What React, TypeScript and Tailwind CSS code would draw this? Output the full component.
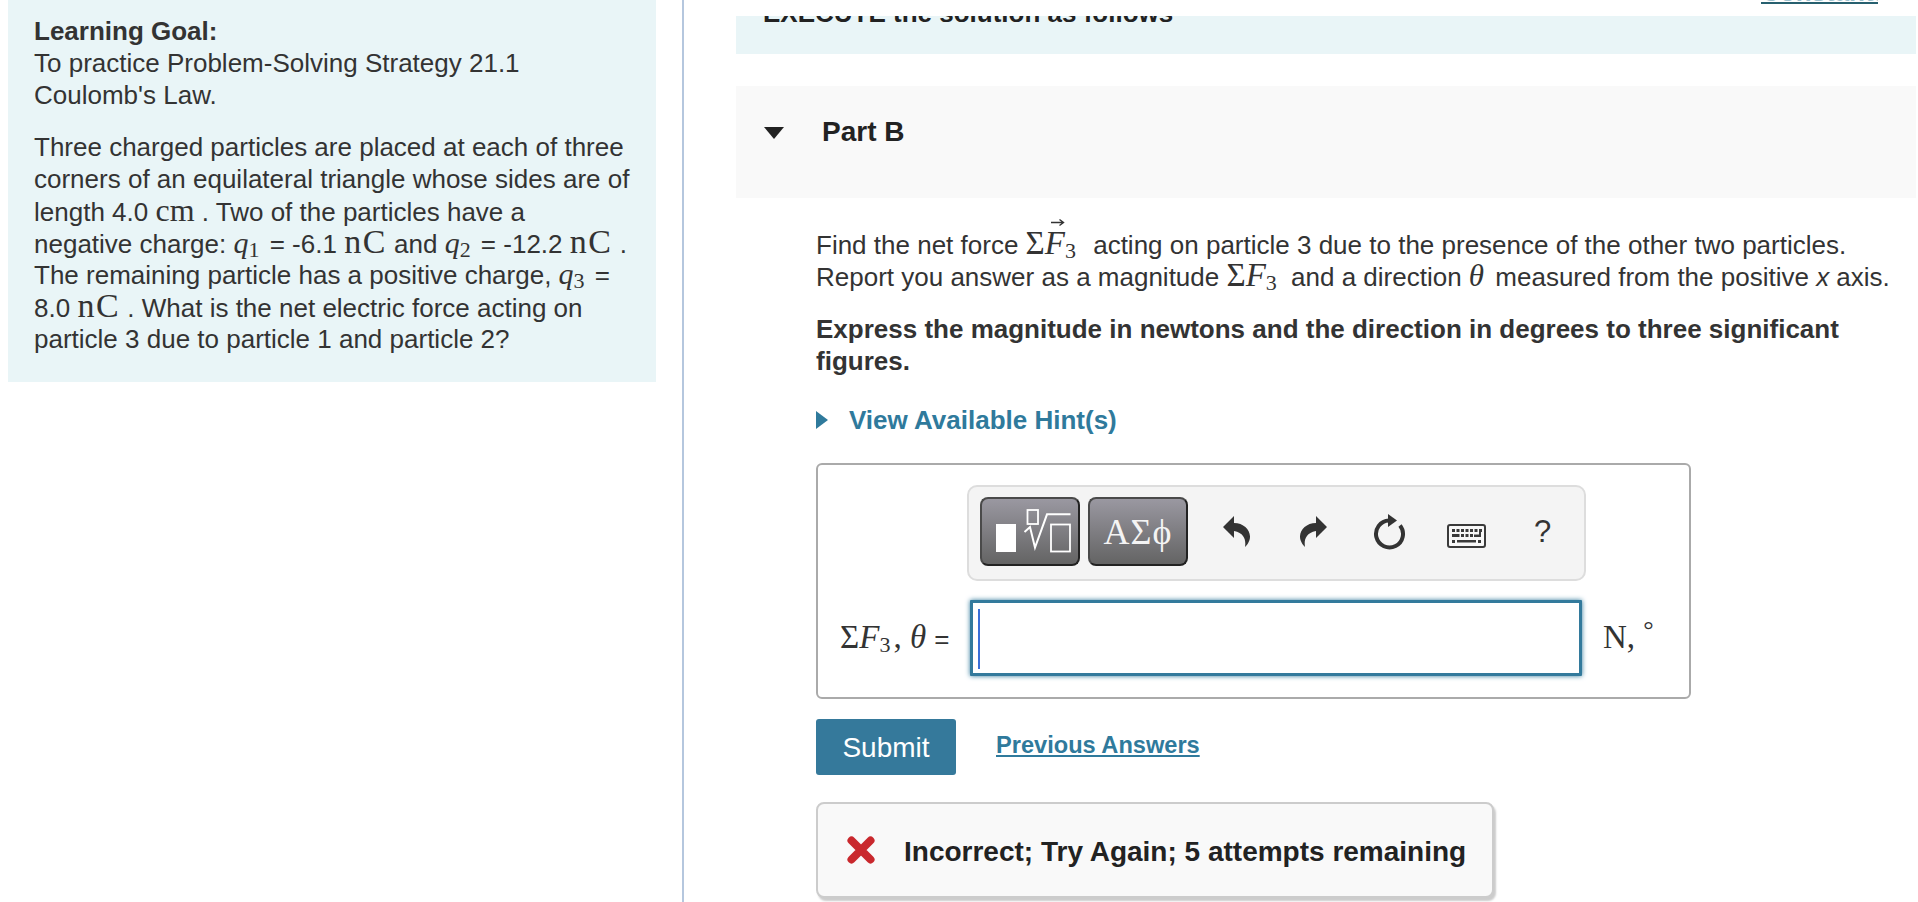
import React from "react";

const math = "font-['Liberation_Serif',serif]";

function Q({ n }: { n: number }) {
  return (
    <span className={`${math} italic text-[30px] leading-none mr-[3px]`}>
      q<span className="not-italic text-[22px] align-[-4px] leading-none">{n}</span>
    </span>
  );
}
function Cm() {
  return <span className={`${math} text-[32px] leading-none`}>cm</span>;
}
function NC() {
  return <span className={`${math} text-[34px] tracking-[1.5px] leading-none`}>nC</span>;
}
function SF({ arrow, after = "" }: { arrow?: boolean; after?: string }) {
  return (
    <span className={`${math} text-[33px] leading-none whitespace-nowrap ${after}`}>
      Σ
      <span className="relative italic">
        F
        {arrow && (
          <svg className="absolute left-[6px] -top-[7px]" width="14" height="9" viewBox="0 0 14 9">
            <path d="M0 4.500H12M8.500 1.500L12.500 4.500L8.500 7.500" fill="none" stroke="#333" strokeWidth="1.400" />
          </svg>
        )}
      </span>
      <span className="text-[22px] align-[-4px] leading-none">3</span>
    </span>
  );
}

function Reply({ flip }: { flip?: boolean }) {
  return (
    <svg width="27" height="31" viewBox="0 0 27 31" className={flip ? "-scale-x-100" : ""}>
      <path d="M0 11 L11 0 V7 C22 7 29 16 26.500 24 C25.500 27 24 29 22 31 C23 25 22 17 11 15 V22 Z" fill="#333" />
    </svg>
  );
}

function Reload() {
  return (
    <svg width="33" height="36" viewBox="0 0 33 36">
      <path d="M16 6.500 A 13.500 13.500 0 1 0 27 11.500" fill="none" stroke="#333" strokeWidth="4" />
      <path d="M15 0 L24 6.500 L15 13 Z" fill="#333" />
    </svg>
  );
}

function Keyboard() {
  const row1 = [5, 9.5, 14, 18.5, 23, 27.5, 32];
  const row2 = [5, 9.5, 14, 18.5, 23];
  return (
    <svg width="39" height="24" viewBox="0 0 39 24">
      <rect x="1" y="1" width="37" height="22" rx="2" fill="#f8f8f8" stroke="#3a3a3a" strokeWidth="2" />
      {row1.map((x) => (
        <rect key={x} x={x} y="5" width="3" height="3" fill="#3a3a3a" />
      ))}
      {row2.map((x) => (
        <rect key={x} x={x} y="10" width="3" height="3" fill="#3a3a3a" />
      ))}
      <path d="M5 10h5v3H5z M27 10.500h5V6h2v7h-7z" fill="#3a3a3a" />
      <rect x="5" y="16" width="3" height="3" fill="#3a3a3a" />
      <rect x="10" y="16" width="19" height="2.500" fill="#3a3a3a" />
      <rect x="31" y="16" width="3" height="3" fill="#3a3a3a" />
    </svg>
  );
}

function TemplateIcon() {
  return (
    <svg width="78" height="46" viewBox="0 0 78 46">
      <rect x="0" y="15" width="20" height="28" fill="#fff" />
      <rect x="31.500" y="1" width="10.500" height="14" fill="none" stroke="#fff" strokeWidth="1.800" />
      <path d="M28.500 23 L34 18 L39 38.500 L51 5.300 H74.500" fill="none" stroke="#fff" strokeWidth="2" />
      <rect x="55" y="15.500" width="19" height="27" fill="none" stroke="#fff" strokeWidth="1.800" />
    </svg>
  );
}

const btn =
  "flex h-[69px] w-[100px] items-center rounded-[8px] border-[2px] border-[#4a4a4a] border-r-[#222] border-b-[#222] bg-gradient-to-b from-[#9a98a1] to-[#646464]";
const line = "h-[32px] whitespace-nowrap";
const lineUp1 = "-mt-px h-[33px] whitespace-nowrap";
const lineUp2 = "-mt-[2px] h-[34px] whitespace-nowrap";

export default function App() {
  return (
    <div className="flex h-[902px] w-[1918px] overflow-hidden bg-white font-['Liberation_Sans',Arial,sans-serif] text-[26px] leading-[32px] text-[#333]">
      {/* left column */}
      <div className="h-full w-[684px] shrink-0 border-r-2 border-[#b5c7de] pl-2">
        <div className="h-[382px] w-[648px] bg-[#e9f5f7] pl-[26px] pt-[15px]">
          <p className="font-bold">Learning Goal:</p>
          <p>To practice Problem-Solving Strategy 21.1</p>
          <p>Coulomb's Law.</p>
          <p className={`mt-[20px] ${line}`}>Three charged particles are placed at each of three</p>
          <p className={line}>corners of an equilateral triangle whose sides are of</p>
          <p className={lineUp1}>
            length 4.0 <Cm /> . Two of the particles have a
          </p>
          <p className={lineUp2}>
            negative charge: <Q n={1} /> = -6.1 <NC /> and <Q n={2} /> = -12.2 <NC /> .
          </p>
          <p className={line}>
            The remaining particle has a positive charge, <Q n={3} /> =
          </p>
          <p className={lineUp2}>
            8.0 <NC /> . What is the net electric force acting on
          </p>
          <p className={line}>particle 3 due to particle 1 and particle 2?</p>
        </div>
      </div>

      {/* right column */}
      <div className="flex min-w-0 flex-1 flex-col pl-[52px] pr-[2px]">
        <div className="flex h-4 shrink-0 justify-end pr-[38px]">
          <div className="h-[4px] w-[117px] overflow-hidden border-b-2 border-[#27606f]">
            <div className="-mt-[24px] text-center font-bold text-[#9fc3cf]">Constants</div>
          </div>
        </div>
        <div className="h-[38px] shrink-0 overflow-hidden bg-[#e9f5f7] pl-[27px]">
          <p className="-mt-[19px] font-bold text-[#222]">EXECUTE the solution as follows</p>
        </div>

        <div className="mt-8 flex h-[112px] shrink-0 items-start bg-[#f9f9f9] pl-[28px] pt-[30px]">
          <svg width="20" height="12" viewBox="0 0 20 12" className="mt-[11px]">
            <path d="M0 0H20L10 12Z" fill="#222" />
          </svg>
          <h2 className="ml-[38px] text-[28px] font-bold text-[#222]">Part B</h2>
        </div>

        <div className="shrink-0 pl-[80px]">
          <p className={`mt-[29px] ${line}`}>
            Find the net force <SF arrow after="mr-[10px]" /> acting on particle 3 due to the presence of the other two particles.
          </p>
          <p className={line}>
            Report you answer as a magnitude <SF after="mr-[7px]" /> and a direction <span className={`${math} italic text-[31px] leading-none mr-[4px]`}>θ</span> measured from the positive <i>x</i> axis.
          </p>
          <p className="mt-[22px] w-[1040px] font-bold">
            Express the magnitude in newtons and the direction in degrees to three significant figures.
          </p>
          <div className="mt-[27px] flex items-center font-bold text-[#2f7a9c]">
            <svg width="12" height="18" viewBox="0 0 12 18">
              <path d="M0 0L12 9L0 18Z" fill="#2f7a9c" />
            </svg>
            <span className="ml-[21px]">View Available Hint(s)</span>
          </div>

          {/* answer box */}
          <div className="mt-[27px] h-[236px] w-[875px] rounded-[6px] border-2 border-[#aaa] pt-[20px]">
            <div className="ml-[149px] flex h-[96px] w-[619px] items-center rounded-[10px] border-2 border-[#ddd] bg-[#f4f4f4] pb-[3px] pl-[11px]">
              <div className={`${btn} justify-start pl-[14px]`}>
                <TemplateIcon />
              </div>
              <div className={`${btn} ml-[8px] justify-center ${math} text-[36px] text-[#f4f4f4] tracking-[1px]`}>ΑΣϕ</div>
              <div className="ml-[35px]"><Reply /></div>
              <div className="ml-[50px]"><Reply flip /></div>
              <div className="ml-[46px]"><Reload /></div>
              <div className="ml-[41px] mt-[8px]"><Keyboard /></div>
              <span className="ml-[48px] text-[31px] text-[#333]">?</span>
            </div>

            <div className="mt-[19px] flex items-center">
              <div className={`${math} ml-[22px] w-[130px] whitespace-nowrap text-[33px]`}>
                <SF after="mr-[3px]" />, <i>θ</i> <span className="font-['Liberation_Sans',sans-serif] text-[26px]">=</span>
              </div>
              <div className="h-[76px] w-[612px] rounded-[1px] border-[3px] border-[#337a9c] bg-white pl-[5px] pt-[6px] shadow-[0_0_5px_#337a9c]">
                <div className="h-[60px] w-[2px] bg-[#3a6fd8]" />
              </div>
              <div className={`${math} ml-[21px] text-[33px]`}>
                N, <span className="relative -top-[10px] text-[26px]">°</span>
              </div>
            </div>
          </div>

          <div className="mt-[20px] flex items-start">
            <button className="h-[56px] w-[140px] rounded-[3px] bg-[#35799b] pt-[2px] text-[28px] text-white">Submit</button>
            <a className="ml-[40px] mt-[10px] text-[23.6px] font-bold text-[#2f7a9c] underline underline-offset-[2px]">Previous Answers</a>
          </div>

          <div className="mt-[27px] flex h-[96px] w-[678px] items-center rounded-[8px] border-2 border-[#ccc] bg-[#f9f9f9] pl-[29px] shadow-[2px_3px_2px_#ccc]">
            <svg width="28" height="28" viewBox="0 0 28 28">
              <path d="M4.500 4.500L23.500 23.500M23.500 4.500L4.500 23.500" stroke="#c9282d" strokeWidth="8" strokeLinecap="round" fill="none" />
            </svg>
            <span className="ml-[29px] mt-[3px] text-[28px] font-bold text-[#222]">Incorrect; Try Again; 5 attempts remaining</span>
          </div>
        </div>
      </div>
    </div>
  );
}
